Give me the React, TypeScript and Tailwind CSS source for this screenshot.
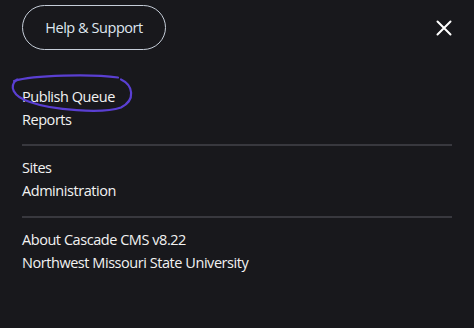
import React from "react";

export default function App() {
  return (
    <div
      className="w-[474px] h-[328px] bg-[#18181c] text-[#f2f2f2] px-[22px] pt-[5px] overflow-hidden tracking-[-0.45px]"
      style={{ fontFamily: '"Open Sans", "Noto Sans", sans-serif' }}
    >
      <div className="flex items-center justify-between">
        <button className="w-[144px] h-[45px] rounded-full border-[1.5px] border-[#c5cdd8] text-[#dfe6ef] text-[14.5px] tracking-[-0.45px] flex items-center justify-center">
          Help &amp; Support
        </button>
        <svg width="16" height="16" viewBox="0 0 16 16">
          <path d="M1.5 1.5 L14.5 14.5 M14.5 1.5 L1.5 14.5" stroke="#ffffff" strokeWidth="2" strokeLinecap="round" />
        </svg>
      </div>

      <div className="relative mt-[35px] text-[14.5px] leading-[23px]">
        <svg
          className="absolute left-[-22px] top-[-12px] pointer-events-none"
          width="160"
          height="50"
          viewBox="0 0 160 50"
        >
          <g transform="translate(0,-72)">
            <path
              d="M14 80 C 34 74, 92 73, 118 76.5"
              stroke="#5a3fd2"
              strokeWidth="2.2"
              fill="none"
              strokeLinecap="round"
            />
            <path
              d="M121 78.5 C 133 84, 136 99, 121 106.5 C 102 113, 52 109, 30 101 C 12 95, 9 85, 17 78.5"
              stroke="#5a3fd2"
              strokeWidth="2.2"
              fill="none"
              strokeLinecap="round"
            />
          </g>
        </svg>
        <div>Publish Queue</div>
        <div>Reports</div>
      </div>

      <div className="h-[2px] bg-[#38383e] mt-[13px]" />

      <div className="mt-[10px] text-[14.5px] leading-[23px]">
        <div>Sites</div>
        <div>Administration</div>
      </div>

      <div className="h-[2px] bg-[#38383e] mt-[14px]" />

      <div className="mt-[10px] text-[14.5px] leading-[23px]">
        <div>About Cascade CMS v8.22</div>
        <div>Northwest Missouri State University</div>
      </div>
    </div>
  );
}
